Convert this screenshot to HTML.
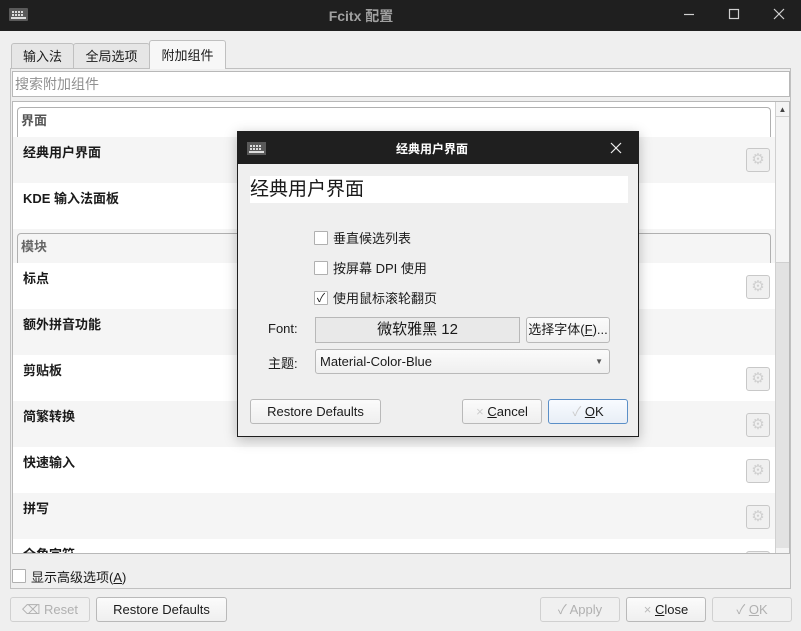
<!DOCTYPE html>
<html><head><meta charset="utf-8"><style>
*{box-sizing:border-box;margin:0;padding:0}
body{width:801px;height:631px;overflow:hidden;background:#efefef;font-family:"Liberation Sans","Noto Sans CJK SC",sans-serif;font-size:13px;color:#1a1a1a;position:relative}
.a{position:absolute}
.btn{position:absolute;height:25px;border:1px solid #b9b9b9;border-radius:3px;background:linear-gradient(#fbfbfb,#efefef);text-align:center;line-height:23px;font-size:13px}
.dis{color:#b0b0b0;border-color:#d0d0d0;background:#f0f0f0}
.gear{position:absolute;left:733px;width:24px;height:24px;border:1px solid #c8c8c8;border-radius:3px;background:#f0f0f0;color:#d0d0d0;font-size:15px;line-height:22px;text-align:center}
.cb{position:absolute;width:14px;height:14px;border:1px solid #b0b0b0;background:#fff;border-radius:1px}
</style></head><body>
<div class="a" style="left:0;top:0;width:801px;height:31px;background:#1f1f1f"></div>
<div class="a" style="left:9px;top:8px;width:19px;height:13px;background:#5a5a5a;border-radius:1px">
<svg width="19" height="13"><g fill="#ddd"><rect x="3" y="3" width="2" height="2"/><rect x="6" y="3" width="2" height="2"/><rect x="9" y="3" width="2" height="2"/><rect x="12" y="3" width="2" height="2"/><rect x="3" y="6" width="2" height="2"/><rect x="6" y="6" width="2" height="2"/><rect x="9" y="6" width="2" height="2"/><rect x="12" y="6" width="2" height="2"/><rect x="2" y="9" width="15" height="2"/></g></svg></div>
<div class="a" style="left:0;top:6px;width:722px;text-align:center;color:#a0a0a0;font-size:14px;font-weight:bold">Fcitx 配置</div>
<svg class="a" style="left:680px;top:5px" width="120" height="20"><g stroke="#d0d0d0" stroke-width="1.2" fill="none"><line x1="4" y1="9.5" x2="14" y2="9.5"/><rect x="49.5" y="4.5" width="9" height="9"/><line x1="94" y1="4" x2="104" y2="14"/><line x1="104" y1="4" x2="94" y2="14"/></g></svg>

<div class="a" style="left:11px;top:43px;width:63px;height:26px;border:1px solid #c0c0c0;border-bottom:none;border-radius:3px 3px 0 0;background:#e6e6e6;text-align:center;line-height:25px">输入法</div>
<div class="a" style="left:73px;top:43px;width:77px;height:26px;border:1px solid #c0c0c0;border-bottom:none;border-radius:3px 3px 0 0;background:#e6e6e6;text-align:center;line-height:25px">全局选项</div>
<div class="a" style="left:149px;top:40px;width:77px;height:29px;border:1px solid #c0c0c0;border-bottom:none;border-radius:3px 3px 0 0;background:#f7f7f7;text-align:center;line-height:29px;z-index:2">附加组件</div>
<div class="a" style="left:10px;top:68px;width:781px;height:521px;border:1px solid #c0c0c0;background:#efefef"></div>
<div class="a" style="left:12px;top:71px;width:778px;height:26px;border:1px solid #b8b8b8;background:#fff;color:#909090;font-size:14px;line-height:24px;padding-left:2px">搜索附加组件</div>

<div class="a" style="left:12px;top:101px;width:778px;height:453px;border:1px solid #b8b8b8;background:#fff;overflow:hidden"></div>
<div class="a" style="left:13px;top:102px;width:762px;height:451px;overflow:hidden">
<div class="a" style="left:4px;top:5px;width:754px;height:30px;border:1px solid #b0b0b0;border-bottom:none;border-radius:4px 4px 0 0;padding:2px 3px;font-weight:bold;color:#555">界面</div>
<div class="a" style="left:0;top:35px;width:762px;height:46px;background:#f5f5f5"></div>
<b class="a" style="left:10px;top:40px">经典用户界面</b>
<b class="a" style="left:10px;top:86px">KDE 输入法面板</b>
<div class="a" style="left:0;top:127px;width:762px;height:34px;background:#f5f5f5"></div>
<div class="a" style="left:4px;top:131px;width:754px;height:30px;border:1px solid #b0b0b0;border-bottom:none;border-radius:4px 4px 0 0;padding:2px 3px;font-weight:bold;color:#666">模块</div>
<b class="a" style="left:10px;top:166px">标点</b>
<div class="a" style="left:0;top:207px;width:762px;height:46px;background:#f5f5f5"></div>
<b class="a" style="left:10px;top:212px">额外拼音功能</b>
<b class="a" style="left:10px;top:258px">剪贴板</b>
<div class="a" style="left:0;top:299px;width:762px;height:46px;background:#f5f5f5"></div>
<b class="a" style="left:10px;top:304px">简繁转换</b>
<b class="a" style="left:10px;top:350px">快速输入</b>
<div class="a" style="left:0;top:391px;width:762px;height:46px;background:#f5f5f5"></div>
<b class="a" style="left:10px;top:396px">拼写</b>
<b class="a" style="left:10px;top:442px">全角字符</b>
<div class="gear" style="top:46px">⚙</div>
<div class="gear" style="top:173px">⚙</div>
<div class="gear" style="top:265px">⚙</div>
<div class="gear" style="top:311px">⚙</div>
<div class="gear" style="top:357px">⚙</div>
<div class="gear" style="top:403px">⚙</div>
<div class="gear" style="top:449px">⚙</div>
</div>
<div class="a" style="left:775px;top:102px;width:14px;height:451px;background:#e2e2e2;border-left:1px solid #d0d0d0"></div>
<div class="a" style="left:776px;top:117px;width:13px;height:146px;background:#f4f4f4;border-bottom:1px solid #d0d0d0"></div>
<div class="a" style="left:776px;top:102px;width:13px;height:15px;background:#f4f4f4;border-bottom:1px solid #d0d0d0;font-size:8px;text-align:center;line-height:15px;color:#444">▲</div>
<div class="a" style="left:776px;top:548px;width:13px;height:5px;background:#f4f4f4"></div>

<div class="cb" style="left:12px;top:569px"></div>
<div class="a" style="left:31px;top:567px;font-size:13px">显示高级选项(<u>A</u>)</div>

<div class="btn dis" style="left:10px;top:597px;width:80px">⌫ Reset</div>
<div class="btn" style="left:96px;top:597px;width:131px">Restore Defaults</div>
<div class="btn dis" style="left:540px;top:597px;width:80px">✓ Apply</div>
<div class="btn" style="left:626px;top:597px;width:80px"><span style="color:#bbb">× </span><u>C</u>lose</div>
<div class="btn dis" style="left:712px;top:597px;width:80px">✓ <u>O</u>K</div>

<div class="a" style="left:237px;top:131px;width:402px;height:306px;border:1px solid #1f1f1f;background:#efefef;box-shadow:0 3px 12px rgba(0,0,0,.25)">
<div class="a" style="left:0;top:0;width:400px;height:32px;background:#1f1f1f"></div>
<div class="a" style="left:9px;top:10px;width:19px;height:13px;background:#5a5a5a">
<svg width="19" height="13"><g fill="#ddd"><rect x="3" y="3" width="2" height="2"/><rect x="6" y="3" width="2" height="2"/><rect x="9" y="3" width="2" height="2"/><rect x="12" y="3" width="2" height="2"/><rect x="3" y="6" width="2" height="2"/><rect x="6" y="6" width="2" height="2"/><rect x="9" y="6" width="2" height="2"/><rect x="12" y="6" width="2" height="2"/><rect x="2" y="9" width="15" height="2"/></g></svg></div>
<div class="a" style="left:0;top:8px;width:388px;text-align:center;color:#fff;font-weight:bold;font-size:12px">经典用户界面</div>
<svg class="a" style="left:372px;top:10px" width="12" height="12"><g stroke="#eee" stroke-width="1.2"><line x1="1" y1="1" x2="11" y2="11"/><line x1="11" y1="1" x2="1" y2="11"/></g></svg>
<div class="a" style="left:12px;top:44px;width:378px;height:27px;background:#fff;font-size:19px;line-height:27px">经典用户界面</div>
<div class="cb" style="left:76px;top:99px"></div><div class="a" style="left:95px;top:96px">垂直候选列表</div>
<div class="cb" style="left:76px;top:129px"></div><div class="a" style="left:95px;top:126px">按屏幕 DPI 使用</div>
<div class="cb" style="left:76px;top:159px;font-size:12px;line-height:12px;text-align:center">✓</div><div class="a" style="left:95px;top:156px">使用鼠标滚轮翻页</div>
<div class="a" style="left:30px;top:189px">Font:</div>
<div class="a" style="left:77px;top:185px;width:205px;height:26px;border:1px solid #b8b8b8;background:#e9e9e9;text-align:center;line-height:24px;font-size:15px">微软雅黑 12</div>
<div class="btn" style="left:288px;top:185px;width:84px;height:26px;font-size:13px">选择字体(<u>F</u>)...</div>
<div class="a" style="left:30px;top:221px">主题:</div>
<div class="btn" style="left:77px;top:217px;width:295px;text-align:left;padding-left:4px">Material-Color-Blue<span style="position:absolute;right:6px;top:0;font-size:8px;color:#555">▼</span></div>
<div class="btn" style="left:12px;top:267px;width:131px">Restore Defaults</div>
<div class="btn" style="left:224px;top:267px;width:80px"><span style="color:#ccc">× </span><u>C</u>ancel</div>
<div class="btn" style="left:310px;top:267px;width:80px;border-color:#5b8fc7;background:linear-gradient(#f8fbff,#e8eef6)"><span style="color:#ccc">✓ </span><u>O</u>K</div>
</div>
</body></html>
